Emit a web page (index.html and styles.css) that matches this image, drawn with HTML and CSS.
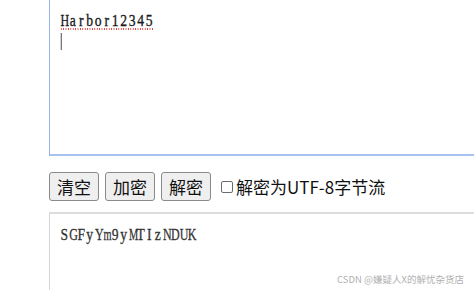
FILE: index.html
```html
<!DOCTYPE html>
<html lang="zh">
<head>
<meta charset="utf-8">
<title>Base64</title>
<link rel="stylesheet" href="styles.css">
</head>
<body>
<div class="page">
  <div class="area area-input">
    <div class="line"><span class="misspelled"><span class="ch mid">H</span><span class="ch">a</span><span class="ch">r</span><span class="ch">b</span><span class="ch">o</span><span class="ch">r</span><span class="ch">1</span><span class="ch">2</span><span class="ch">3</span><span class="ch">4</span><span class="ch">5</span></span></div>
    <div class="line"><span class="caret"></span></div>
  </div>
  <div class="toolbar">
    <button class="btn" type="button">清空</button>
    <button class="btn" type="button">加密</button>
    <button class="btn" type="button">解密</button>
    <label class="check"><input class="box" type="checkbox"><span>解密为UTF-8字节流</span></label>
  </div>
  <div class="area area-output">
    <div class="line"><span class="ch">S</span><span class="ch mid">G</span><span class="ch">F</span><span class="ch">y</span><span class="ch mid">Y</span><span class="ch wide">m</span><span class="ch">9</span><span class="ch">y</span><span class="ch wide">M</span><span class="ch">T</span><span class="ch">I</span><span class="ch">z</span><span class="ch mid">N</span><span class="ch mid">D</span><span class="ch mid">U</span><span class="ch mid">K</span></div>
  </div>
</div>
<div class="watermark">CSDN @嫌疑人X的解忧杂货店</div>
</body>
</html>
```
FILE: styles.css
```css
html, body {
  margin: 0;
  padding: 0;
  background: #ffffff;
  overflow: hidden;
  width: 474px;
  height: 290px;
}

.page {
  padding-left: 49px;
  width: 474px;
  box-sizing: border-box;
  display: flex;
  flex-direction: column;
}

.area {
  width: 460px;
  box-sizing: border-box;
  font-family: "Liberation Serif", "DejaVu Serif", serif;
  font-size: 17px;
  line-height: 21px;
  color: #1a1a1a;
  -webkit-text-stroke: 0.35px #1a1a1a;
  padding-left: 10px;
}

.area-input {
  height: 156px;
  border-left: 1px solid #94b3ec;
  border-bottom: 2px solid #a8c1f1;
  padding-top: 10px;
}

.line {
  height: 21px;
  white-space: pre;
  transform: scaleX(0.8);
  transform-origin: left center;
}

.ch {
  display: inline-block;
  width: 10.625px;
  text-align: center;
}

.ch.mid {
  transform: scaleX(0.88);
}

.ch.wide {
  transform: scaleX(0.76);
}

.misspelled {
  display: inline-block;
  line-height: 17px;
  padding-bottom: 1px;
  background-image: radial-gradient(circle, #e0302a 0.8px, transparent 1px);
  background-size: 3px 2px;
  background-repeat: repeat-x;
  background-position: 0 100%;
}

.caret {
  display: inline-block;
  width: 1.25px;
  height: 17px;
  margin-top: 2px;
  margin-left: 1px;
  background: #222222;
  vertical-align: top;
}

.toolbar {
  display: flex;
  align-items: center;
  gap: 6px;
  margin-top: 16px;
  height: 29px;
}

.btn {
  width: 50px;
  height: 29px;
  margin: 0;
  padding: 0;
  border: 1px solid #8a8a8a;
  border-radius: 3px;
  background: #efefef;
  font-family: "Noto Sans CJK SC", "Noto Sans", sans-serif;
  font-size: 17px;
  color: #111111;
  line-height: 27px;
}

.check {
  display: flex;
  align-items: center;
  margin-left: 4px;
  font-family: "Noto Sans CJK SC", "Noto Sans", sans-serif;
  font-size: 17px;
  color: #111111;
}

.box {
  appearance: none;
  -webkit-appearance: none;
  width: 12px;
  height: 12px;
  margin: 0 3px 0 0;
  border: 1px solid #6b6b6b;
  border-radius: 2px;
  background: #ffffff;
}

.area-output {
  margin-top: 11px;
  height: 90px;
  border-left: 1px solid #d6d6d6;
  border-top: 2px solid #dcdcdc;
  padding-top: 10px;
  color: #333333;
  -webkit-text-stroke: 0.3px #333333;
}

.watermark {
  position: absolute;
  right: 10px;
  bottom: 6px;
  font-family: "Noto Sans CJK SC", "Noto Sans", sans-serif;
  font-size: 9.5px;
  line-height: 10px;
  color: #b0b0b0;
  white-space: nowrap;
}
```
